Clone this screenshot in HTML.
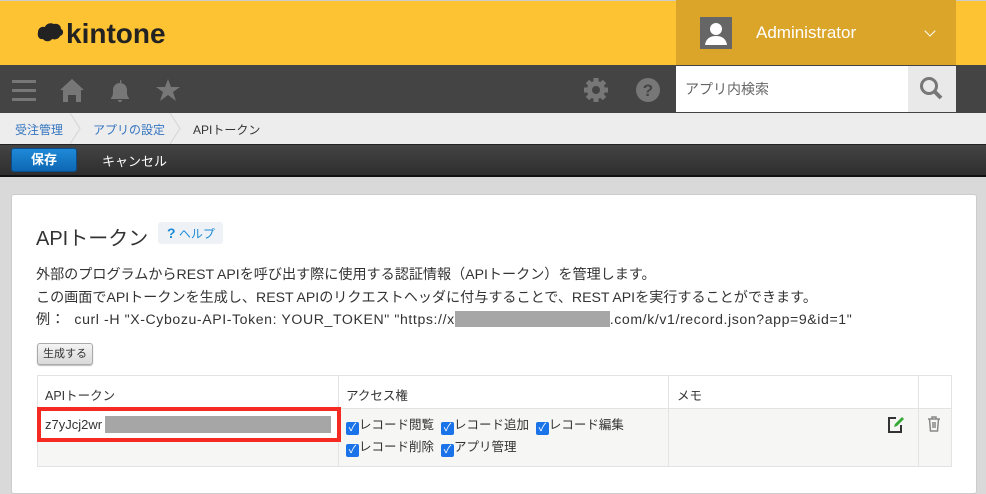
<!DOCTYPE html>
<html><head><meta charset="utf-8"><style>
*{margin:0;padding:0;box-sizing:border-box}
body{width:986px;height:482px;overflow:hidden;background:#d9d9d9;font-family:"Liberation Sans","Noto Sans CJK JP",sans-serif;position:relative}
.a{position:absolute}
.cb{display:inline-block;width:13px;height:13px;background:#1a73e8;border-radius:2px;vertical-align:-2px;color:#fff;font-size:11px;line-height:13px;text-align:center}
</style></head><body>
<div class="a" style="left:0;top:0;width:986px;height:65px;background:#fec333;border-top:1px solid #ccc"></div>
<div class="a" style="left:34px;top:18px;font-size:28px;font-weight:bold;color:#222"><svg width="32" height="26" viewBox="0 0 30 26" style="vertical-align:-3px"><path d="M3 12c0-4 4-6 7-5 1-3 5-5 9-3 3-1 7 1 7 5 3 1 3 6-1 7-1 3-5 4-8 3-2 3-7 3-9 0-4 1-6-3-5-7z" fill="#222"/></svg>kintone</div>
<div class="a" style="left:676px;top:0;width:280px;height:65px;background:#dba52a"></div>
<div class="a" style="left:700px;top:17px;width:32px;height:32px;background:#666"><svg width="32" height="32"><circle cx="16" cy="12" r="6" fill="#fff"/><path d="M5 28c1-7 6-9 11-9s10 2 11 9z" fill="#fff"/></svg></div>
<div class="a" style="left:756px;top:23px;font-size:17px;color:#fff">Administrator</div>
<div class="a" style="left:926px;top:27px;width:8px;height:8px;border-right:1px solid #fff;border-bottom:1px solid #fff;transform:rotate(45deg)"></div>
<div class="a" style="left:0;top:65px;width:986px;height:48px;background:#444"></div>
<svg class="a" style="left:10px;top:78px" width="170" height="26"><g fill="#777"><rect x="2" y="2" width="24" height="3"/><rect x="2" y="11" width="24" height="3"/><rect x="2" y="20" width="24" height="3"/><path d="M50 12l12-11 12 11h-3v12h-5v-7h-8v7h-5v-12z"/><path d="M101 20c2-2 2-4 2-8 0-4 3-7 7-7s7 3 7 7c0 4 0 6 2 8v1h-18z M108 22h4a2 2 0 0 1-4 0z M110 2a1 1 0 0 1 0 3z"/><path d="M158 1l3 8h9l-7 5 3 9-8-6-8 6 3-9-7-5h9z"/></g></svg>
<svg class="a" style="left:583px;top:76px" width="80" height="28"><g fill="#777"><circle cx="13" cy="14" r="9"/><g stroke="#777" stroke-width="5"><path d="M13 2v24M1 14h24M4.5 5.5l17 17M21.5 5.5l-17 17"/></g><circle cx="13" cy="14" r="4" fill="#444"/><circle cx="65" cy="14" r="12"/></g><text x="65" y="20" font-size="17" font-weight="bold" fill="#444" text-anchor="middle" font-family="Liberation Sans">?</text></svg>
<div class="a" style="left:676px;top:66px;width:232px;height:46px;background:#fff;font-size:14px;color:#666;padding:13px 0 0 9px">アプリ内検索</div>
<div class="a" style="left:908px;top:66px;width:48px;height:46px;background:#e9e9e9"><svg width="48" height="46"><circle cx="21" cy="20" r="7.5" fill="none" stroke="#777" stroke-width="3"/><path d="M26 25l7 7" stroke="#777" stroke-width="4"/></svg></div>
<div class="a" style="left:0;top:113px;width:986px;height:31px;background:#ededed"></div>
<div class="a" style="left:15px;top:121px;font-size:12px;color:#3575c0">受注管理</div>
<div class="a" style="left:93px;top:121px;font-size:12px;color:#3575c0">アプリの設定</div>
<div class="a" style="left:193px;top:121px;font-size:12px;color:#333">APIトークン</div>
<svg class="a" style="left:70px;top:113px" width="120" height="31"><path d="M0 0l10 15.5L0 31M100 0l10 15.5L100 31" fill="none" stroke="#d4d4d4"/></svg>
<div class="a" style="left:0;top:144px;width:986px;height:33px;background:linear-gradient(#444,#2e2e2e);border-top:1px solid #222;border-bottom:2px solid #111"></div>
<div class="a" style="left:11px;top:148px;width:66px;height:24px;background:linear-gradient(#1f8ad8,#0d67b3);border:1px solid #0a4d8a;border-radius:3px;color:#fff;font-size:13px;font-weight:bold;text-align:center;line-height:22px">保存</div>
<div class="a" style="left:102px;top:151px;font-size:13px;color:#fff">キャンセル</div>
<div class="a" style="left:11px;top:194px;width:966px;height:300px;background:#fff;border:1px solid #ccc;border-radius:3px"></div>
<div class="a" style="left:36px;top:222px;font-size:20px;color:#333">APIトークン</div>
<div class="a" style="left:158px;top:222px;width:65px;height:22px;background:#eef2f6;border-radius:3px;font-size:12px;color:#1a8ad8;padding:3px 0 0 9px"><b style="font-size:14px">?</b> ヘルプ</div>
<div class="a" style="left:36px;top:263px;font-size:14.1px;color:#333;line-height:22.5px;white-space:nowrap">外部のプログラムからREST APIを呼び出す際に使用する認証情報（APIトークン）を管理します。<br>この画面でAPIトークンを生成し、REST APIのリクエストヘッダに付与することで、REST APIを実行することができます。<br><span style="letter-spacing:0.6px">例：&nbsp; curl -H "X-Cybozu-API-Token: YOUR_TOKEN" "https://x</span><span style="display:inline-block;width:155px;height:16px;background:#a6a6a6;vertical-align:-3px"></span><span style="letter-spacing:0.6px">.com/k/v1/record.json?app=9&amp;id=1"</span></div>
<div class="a" style="left:37px;top:343px;width:56px;height:22px;background:linear-gradient(#f4f4f4,#d9d9d9);border:1px solid #aaa;border-radius:3px;font-size:11px;color:#333;text-align:center;line-height:20px;box-shadow:0 1px 1px #bbb">生成する</div>
<div class="a" style="left:37px;top:375px;width:915px;height:92px;border:1px solid #e3e3e3"></div>
<div class="a" style="left:38px;top:408px;width:913px;height:58px;background:#f6f6f4;border-top:1px solid #e3e3e3"></div>
<div class="a" style="left:338px;top:376px;width:1px;height:90px;background:#e3e3e3"></div>
<div class="a" style="left:668px;top:376px;width:1px;height:90px;background:#e3e3e3"></div>
<div class="a" style="left:918px;top:376px;width:1px;height:90px;background:#e3e3e3"></div>
<div class="a" style="left:45px;top:385px;font-size:12.5px;color:#333">APIトークン</div>
<div class="a" style="left:346px;top:385px;font-size:12.5px;color:#333">アクセス権</div>
<div class="a" style="left:677px;top:385px;font-size:12.5px;color:#333">メモ</div>
<div class="a" style="left:37px;top:407px;width:304px;height:35px;border:4px solid #f52a22;background:#fff"></div>
<div class="a" style="left:45px;top:417px;font-size:13px;color:#333">z7yJcj2wr</div>
<div class="a" style="left:105px;top:416px;width:226px;height:17px;background:#a6a6a6"></div>
<div class="a" style="left:346px;top:414px;font-size:12.5px;color:#333;line-height:22px;white-space:nowrap">
<span class="cb">✓</span>レコード閲覧&nbsp;&nbsp;<span class="cb">✓</span>レコード追加&nbsp;&nbsp;<span class="cb">✓</span>レコード編集<br><span class="cb">✓</span>レコード削除&nbsp;&nbsp;<span class="cb">✓</span>アプリ管理</div>
<svg class="a" style="left:886px;top:415px" width="20" height="20"><path d="M10 3H3v14h12v-7" fill="none" stroke="#333" stroke-width="2"/><path d="M8 12l1-3 7-7 2 2-7 7z" fill="#3a3"/></svg>
<svg class="a" style="left:926px;top:415px" width="16" height="18"><g fill="none" stroke="#888" stroke-width="1.5"><path d="M2 4h12M6 4V2h4v2M3.5 4l1 12h7l1-12M7 7v6M9 7v6"/></g></svg>
</body></html>
